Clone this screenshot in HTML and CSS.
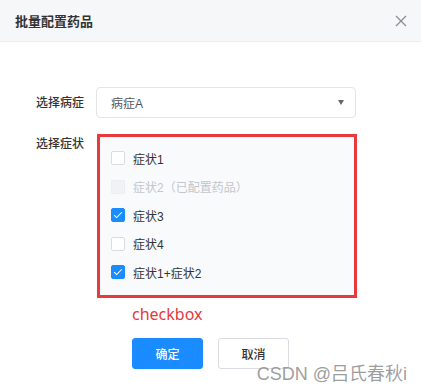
FILE: index.html
```html
<!DOCTYPE html>
<html lang="zh-CN">
<head>
    <meta charset="UTF-8">
    <meta name="viewport" content="width=device-width, initial-scale=1.0">
    <title>批量配置药品</title>
    <link rel="stylesheet" href="styles.css">
</head>
<body>
    <div class="dialog">
        <div class="dialog-header">
            <span class="dialog-title">批量配置药品</span>
            <svg class="close" width="12" height="12" viewBox="0 0 12 12">
                <path d="M1 1 L11 11 M11 1 L1 11" stroke="#8a8d93" stroke-width="1.3" fill="none"/>
            </svg>
        </div>

        <div class="dialog-body">
            <div class="form-row row-select">
                <label class="form-label">选择病症</label>
                <div class="select">
                    <span>病症A</span>
                    <span class="arrow"></span>
                </div>
            </div>

            <div class="form-row">
                <label class="form-label">选择症状</label>
                <div class="check-group">
                    <div class="check-item">
                        <span class="box"></span>症状1
                    </div>
                    <div class="check-item disabled">
                        <span class="box"></span>症状2（已配置药品）
                    </div>
                    <div class="check-item checked">
                        <span class="box"></span>症状3
                    </div>
                    <div class="check-item">
                        <span class="box"></span>症状4
                    </div>
                    <div class="check-item checked">
                        <span class="box"></span>症状1+症状2
                    </div>
                </div>
            </div>

            <p class="note">checkbox</p>

            <div class="actions">
                <button class="btn btn-primary">确定</button>
                <button class="btn">取消</button>
            </div>
        </div>

        <div class="watermark">CSDN @吕氏春秋i</div>
    </div>
</body>
</html>
```

FILE: styles.css
```css
body {
    margin: 0;
    background: #fff;
    font-family: "Liberation Sans", "Noto Sans CJK SC", sans-serif;
    color: #333;
}
.dialog {
    position: relative;
    width: 421px;
    height: 391px;
    overflow: hidden;
}
.dialog-header {
    height: 41px;
    padding: 0 15px;
    display: flex;
    align-items: center;
    justify-content: space-between;
    background-color: #f6f7f9;
    border-bottom: 1px solid #eceef1;
}
.dialog-title {
    font-size: 13px;
    font-weight: 600;
    color: #333;
}
.close {
    margin-right: -1px;
}
.dialog-body {
    padding: 45px 0 0 36px;
}
.form-row {
    display: flex;
    align-items: flex-start;
}
.row-select {
    align-items: center;
    margin-bottom: 16px;
}
.form-label {
    width: 60px;
    font-size: 12px;
    font-weight: 500;
    line-height: 20px;
    color: #333;
}
.select {
    height: 29px;
    border: 1px solid #e2e4e8;
    border-radius: 4px;
    display: flex;
    align-items: center;
    justify-content: space-between;
    padding: 0 11px 0 14px;
    font-size: 12px;
    color: #555;
    box-sizing: content-box;
    width: 233px;
}
.arrow {
    width: 0;
    height: 0;
    border-left: 3.5px solid transparent;
    border-right: 3.5px solid transparent;
    border-top: 5px solid #666;
}
.check-group {
    margin-left: 1px;
    width: 254px;
    padding: 7px 0 8px;
    border: 3px solid #e8393d;
    background-color: #f9fafc;
}
.check-item {
    height: 28.5px;
    display: flex;
    align-items: center;
    padding-left: 11px;
    font-size: 12px;
    color: #333;
}
.box {
    width: 12px;
    height: 12px;
    margin-right: 8px;
    border: 1px solid #d9dce1;
    border-radius: 2px;
    background: #fff;
    position: relative;
}
.check-item.disabled {
    color: #c3c6cc;
}
.check-item.disabled .box {
    background: #f1f2f4;
    border-color: #eceef1;
}
.check-item.checked .box {
    background: #1a8cff;
    border-color: #1a8cff;
}
.check-item.checked .box::after {
    content: "";
    position: absolute;
    left: 4px;
    top: 1px;
    width: 3px;
    height: 7px;
    border: solid #fff;
    border-width: 0 1.5px 1.5px 0;
    transform: rotate(45deg);
}
.note {
    margin: 4px 0 0 96px;
    font-family: "Noto Sans", "Liberation Sans", sans-serif;
    font-size: 16px;
    line-height: 24px;
    color: #e5393b;
}
.actions {
    display: flex;
    gap: 15px;
    margin: 12px 0 0 96px;
}
.btn {
    width: 71px;
    height: 31px;
    border: 1px solid #d9dce1;
    border-radius: 3px;
    background: #fff;
    font-family: "Liberation Sans", "Noto Sans CJK SC", sans-serif;
    font-size: 12px;
    font-weight: 500;
    color: #333;
    padding: 0;
}
.btn-primary {
    background: #1a8cff;
    border-color: #1a8cff;
    color: #fff;
}
.watermark {
    position: absolute;
    right: 14px;
    bottom: 6px;
    font-size: 18px;
    color: rgba(140, 140, 140, 0.85);
}
```
